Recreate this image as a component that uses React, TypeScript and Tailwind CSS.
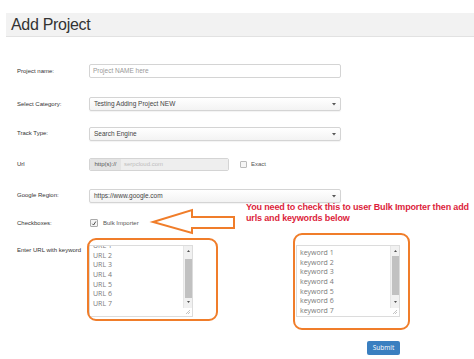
import React from "react";

const Arrow = () => (
  <svg width="10" height="6" viewBox="0 0 10 6" className="block">
    <path d="M3 2 L7 2 L5 4.5 Z" fill="#555" />
  </svg>
);

function Select({ text }: { text: string }) {
  return (
    <div className="w-[252px] h-[14px] flex items-center justify-between border border-[#d4d4d4] rounded-[2px] bg-gradient-to-b from-white to-[#f3f3f3] shadow-[0_1px_1px_rgba(0,0,0,0.05)] pl-[4px] pr-[1px] text-[6.5px]">
      <span className="text-[#444]">{text}</span>
      <Arrow />
    </div>
  );
}

function ScrollBox({ lines, offset, thumbTop }: { lines: string[]; offset: string; thumbTop: number }) {
  return (
    <div className="relative w-[104px] h-[72px] border border-[#dcdcdc] bg-white overflow-hidden">
      <div className={`pl-[3px] ${offset} text-[7px] leading-[9.65px] text-[#7a7a7a] font-['Open_Sans',sans-serif]`}>
        {lines.map((l) => (
          <div key={l}>{l}</div>
        ))}
      </div>
      <div className="absolute right-0 top-0 w-[9px] h-[62px] bg-[#f1f1f1] border-l border-[#e6e6e6]">
        <svg width="9" height="8" viewBox="0 0 9 8" className="absolute top-[1px] left-0">
          <path d="M3 5 L6 5 L4.5 3 Z" fill="#505050" />
        </svg>
        <div className="absolute left-[1px] w-[7px] bg-[#c1c1c1]" style={{ top: thumbTop, height: 39 }} />
        <svg width="9" height="8" viewBox="0 0 9 8" className="absolute top-[52px] left-0">
          <path d="M3 3 L6 3 L4.5 5 Z" fill="#505050" />
        </svg>
      </div>
      <svg width="6" height="6" viewBox="0 0 6 6" className="absolute right-[1px] bottom-[1px]">
        <path d="M1 5 L5 1 M3 5 L5 3" stroke="#aaa" strokeWidth="0.7" />
      </svg>
    </div>
  );
}

export default function App() {
  return (
    <div className="relative w-[474px] h-[359px] bg-white overflow-hidden font-['Liberation_Sans',Arial,sans-serif] text-[6px] text-[#333]">
      <div className="pt-[13px] pl-[6px]">
        <div className="h-[24px] bg-[#f2f2f2] border-b border-[#e2e2e2] flex items-center pl-[5px]">
          <span className="text-[16px] tracking-[-0.3px] text-[#333] leading-none">Add Project</span>
        </div>
      </div>

      <div className="pl-[17px]">
        <div className="mt-[27px] flex items-center h-[14px]">
          <div className="w-[72px]">Project name:</div>
          <div className="w-[252px] h-[14px] flex items-center border border-[#d4d4d4] rounded-[2px] bg-white pl-[3px] text-[#999] text-[6.5px]">
            Project NAME here
          </div>
        </div>

        <div className="mt-[19px] flex items-center h-[14px]">
          <div className="w-[72px]">Select Category:</div>
          <Select text="Testing Adding Project NEW" />
        </div>

        <div className="mt-[16px] flex items-center h-[13px]">
          <div className="w-[72px]">Track Type:</div>
          <Select text="Search Engine" />
        </div>

        <div className="mt-[18px] flex items-center h-[13px]">
          <div className="w-[72px]">Url</div>
          <div className="w-[140px] h-[13px] flex border border-[#d4d4d4] rounded-[2px] overflow-hidden">
            <div className="w-[31px] flex items-center justify-center bg-[#e4e4e4] text-[#555]">http(s)://</div>
            <div className="flex-1 flex items-center bg-[#eeeeee] pl-[3px] text-[#bdbdbd]">serpcloud.com</div>
          </div>
          <div className="ml-[11px] w-[7px] h-[7px] border border-[#bbb] rounded-[1px] bg-[#f6f6f6]" />
          <div className="ml-[4px] text-[#555]">Exact</div>
        </div>

        <div className="mt-[18px] flex items-center h-[13px]">
          <div className="w-[72px]">Google Region:</div>
          <Select text="https://www.google.com" />
        </div>

        <div className="mt-[15px] flex items-center h-[12px]">
          <div className="w-[72px]">Checkboxes:</div>
          <div className="ml-[1px] w-[8px] h-[8px] border border-[#aaa] rounded-[1px] bg-[#f4f4f4] flex items-center justify-center">
            <svg width="7" height="7" viewBox="0 0 7 7">
              <path d="M1.5 3.8 L3 5.3 L5.6 1.2" stroke="#333" strokeWidth="1" fill="none" />
            </svg>
          </div>
          <div className="ml-[5px] text-[#555]">Bulk Importer</div>
        </div>

        <div className="mt-[16px] flex items-start">
          <div className="w-[72px] pt-[1px] leading-[9px] whitespace-nowrap">Enter URL with keyword</div>
          <ScrollBox
            lines={["URL 1", "URL 2", "URL 3", "URL 4", "URL 5", "URL 6", "URL 7"]}
            offset="mt-[-5px]"
            thumbTop={13}
          />
          <div className="ml-[103px]">
            <ScrollBox
              lines={["keyword 1", "keyword 2", "keyword 3", "keyword 4", "keyword 5", "keyword 6", "keyword 7"]}
              offset="pt-[2px]"
              thumbTop={10}
            />
          </div>
        </div>

        <div className="mt-[24px] ml-[350px] w-[33px] h-[14px] bg-[#3a7fc0] rounded-[2px] flex items-center justify-center text-white text-[6.5px] font-['Open_Sans',sans-serif]">
          Submit
        </div>
      </div>

      {/* annotations */}
      <svg className="absolute left-0 top-0 pointer-events-none" width="474" height="359">
        <path
          d="M153 222 L192 210 L192 217 L234 217 L234 228 L192 228 L192 233 Z"
          fill="white"
          stroke="#f07d2a"
          strokeWidth="2"
          strokeLinejoin="miter"
        />
        <rect x="88" y="239" width="129" height="81" rx="8" fill="none" stroke="#f07d2a" strokeWidth="2" />
        <rect x="294" y="234" width="115" height="95" rx="8" fill="none" stroke="#f07d2a" strokeWidth="2" />
      </svg>
      <div className="absolute left-[246px] top-[202px] text-[9px] leading-[11px] font-bold tracking-[-0.15px] text-[#dc1e3c] whitespace-nowrap">
        <div>You need to check this to user Bulk Importer then add</div>
        <div>urls and keywords below</div>
      </div>
    </div>
  );
}
